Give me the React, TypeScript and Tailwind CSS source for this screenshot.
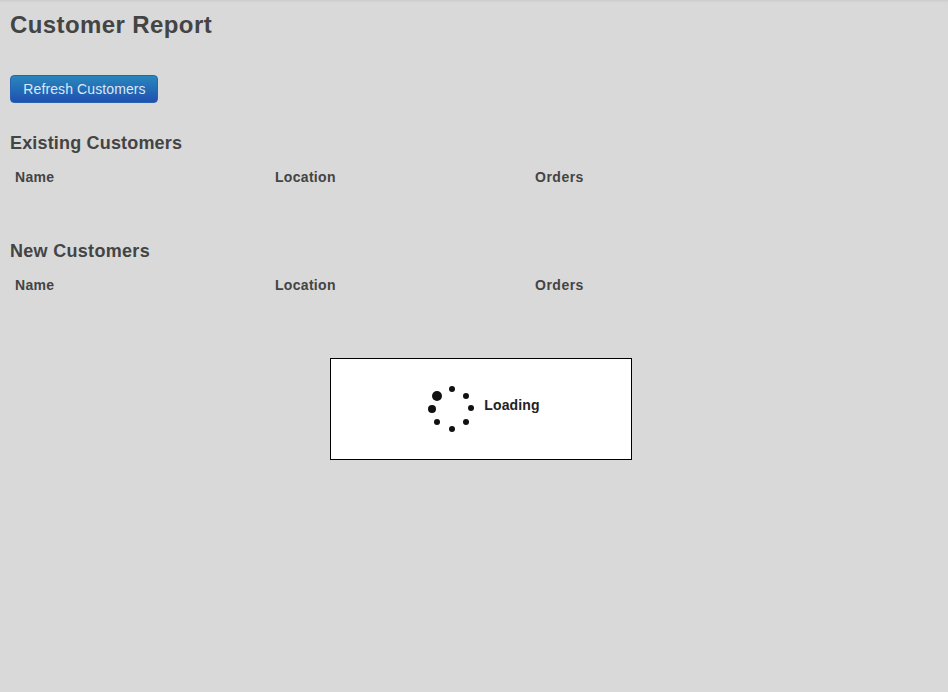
function CustomerTable({ title, spacing }: { title: string; spacing: string }) {
  return (
    <section className="h-[108px]">
      <h2 className={`text-[18px] leading-[20px] font-bold text-[#444444] ${spacing}`}>{title}</h2>
      <div className="mt-[16px] flex pl-[5px] text-[14px] leading-[16px] font-bold tracking-[0.3px] text-[#444444]">
        <div className="w-[260px]">Name</div>
        <div className="w-[260px]">Location</div>
        <div className="w-[260px] tracking-[0.5px]">Orders</div>
      </div>
    </section>
  );
}

function Spinner() {
  return (
    <svg width="48" height="48" viewBox="0 0 48 48" className="fill-[#111111]">
      <circle cx="24" cy="5" r="3" />
      <circle cx="38" cy="12" r="3" />
      <circle cx="43" cy="24" r="3" />
      <circle cx="38" cy="38" r="3" />
      <circle cx="24" cy="45" r="3" />
      <circle cx="9" cy="38" r="3" />
      <circle cx="4" cy="25" r="4" />
      <circle cx="9" cy="12" r="5" />
    </svg>
  );
}

export default function App() {
  return (
    <div className="relative h-[692px] overflow-hidden bg-[#d9d9d9] px-[10px] pt-[11px] font-['Liberation_Sans',Arial,sans-serif] shadow-[inset_0_3px_3px_-2px_rgba(0,0,0,0.08)]">
      <h1 className="text-[24px] leading-[28px] font-bold tracking-[0.4px] text-[#444444]">Customer Report</h1>

      <button className="mt-[36px] block h-[28px] w-[148px] rounded-[4px] border border-[#2a62b4] bg-gradient-to-b from-[#2a86bc] to-[#2150b0] pl-[1px] text-[14px] tracking-[0.1px] text-[#dce8f4]">
        Refresh Customers
      </button>

      <div className="mt-[30px]">
        <CustomerTable title="Existing Customers" spacing="tracking-[0.17px]" />
        <CustomerTable title="New Customers" spacing="tracking-[0.3px]" />
      </div>

      <div className="absolute top-[358px] left-[330px] flex h-[102px] w-[302px] items-center justify-center border border-black bg-white">
        <div className="-mt-[2px] ml-[6px] flex items-center gap-[8px]">
          <Spinner />
          <span className="-mt-[6px] text-[14px] font-bold tracking-[0.15px] text-[#222222]">Loading</span>
        </div>
      </div>
    </div>
  );
}
